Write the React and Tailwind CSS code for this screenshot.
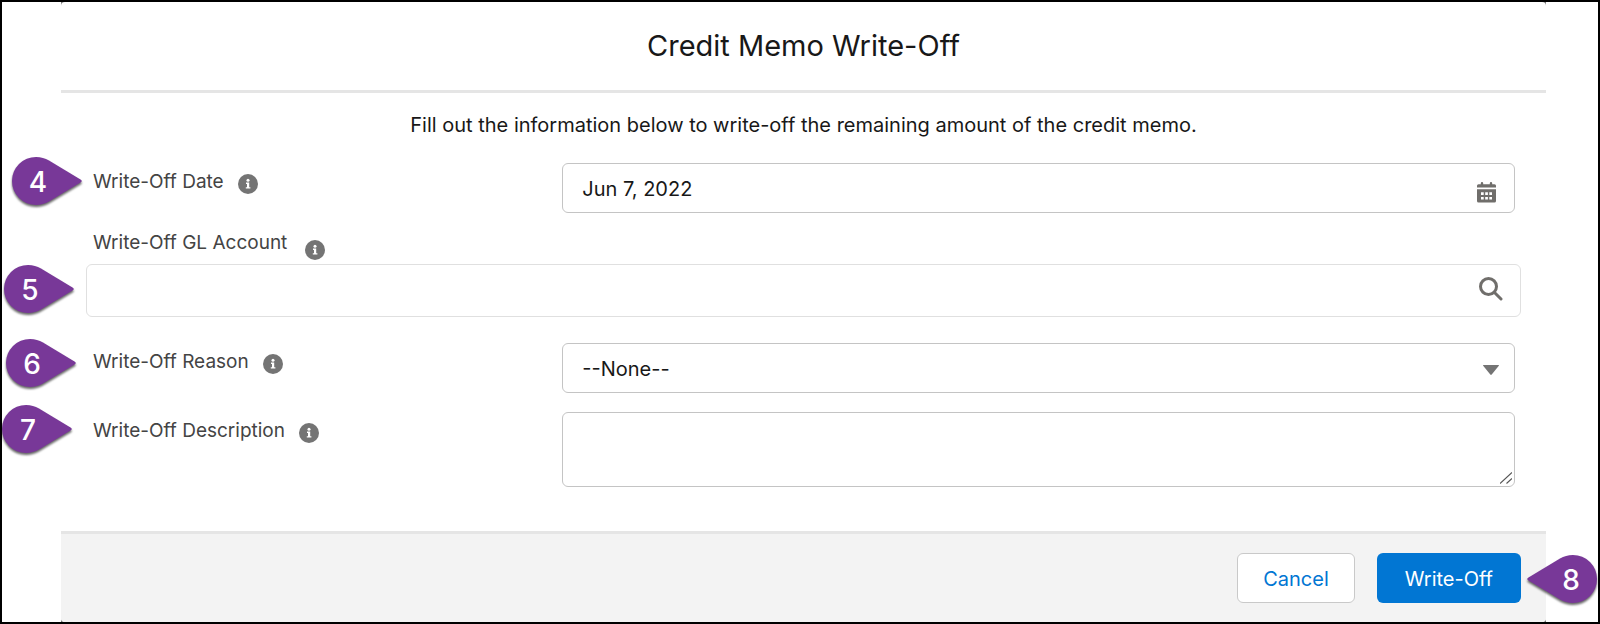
import { useState } from 'react';
import clsx from 'clsx';

const Pin = ({ number, flip, className }) => (
  <div
    className={clsx(
      'absolute flex h-12 w-[70px] items-center text-[28px] leading-8 font-medium text-white',
      flip ? 'justify-end' : 'justify-start',
      className
    )}
  >
    <svg
      viewBox="0 0 70 48"
      className="absolute inset-0 h-full w-full overflow-visible drop-shadow-[0_2px_1px_rgba(0,0,0,0.6)]"
      aria-hidden="true"
    >
      <path
        transform={flip ? 'translate(70 0) scale(-1 1)' : undefined}
        d="M24 0C29 0 33 1.2 37 3.5L68.5 22.4Q71 24 68.5 25.6L37 44.5C33 46.8 29 48 24 48A24 24 0 0 1 24 0Z"
        fill="#783898"
      />
    </svg>
    <span className="relative w-[52px] pt-px text-center">{number}</span>
  </div>
);

const InfoButton = ({ label, className }) => (
  <button type="button" aria-label={`Help for ${label}`} className={clsx('h-5 w-5 shrink-0', className)}>
    <svg viewBox="0 0 20 20" className="h-5 w-5">
      <circle cx="10" cy="10" r="10" fill="#747474" />
      <circle cx="10" cy="6.2" r="1.5" fill="#fff" />
      <path d="M8 8.6h3.2v4.6h1.2v1.4H7.8v-1.4H9V10H8z" fill="#fff" />
    </svg>
  </button>
);

const FieldRow = ({ id, label, pin, className, children }) => (
  <div className={clsx('relative mr-1.5 ml-[7px] grid grid-cols-[33%_1fr]', className)}>
    {pin}
    <div className="flex items-start gap-3.5 pt-[5px]">
      <label htmlFor={id} className="text-[19px] leading-7 text-[#444]">
        {label}
      </label>
      <InfoButton label={label} className="mt-1.5" />
    </div>
    <div className="relative">{children}</div>
  </div>
);

const CalendarIcon = () => (
  <svg viewBox="0 0 19 21" className="h-[21px] w-[19px]" fill="#706e6b">
    <path d="M1.5 2.3H3.8V1.2a1.2 1.2 0 0 1 2.4 0v1.1h6.6V1.2a1.2 1.2 0 0 1 2.4 0v1.1h2.3Q19 2.3 19 3.8v1.8H0V3.8Q0 2.3 1.5 2.3Z" />
    <path
      fillRule="evenodd"
      d="M0 7.3h19v11.6q0 1.6-1.6 1.6H1.6Q0 20.5 0 18.9ZM4 10.3v2.7h2.7v-2.7ZM8.2 10.3v2.7h2.7v-2.7ZM12.3 10.3v2.7h2.7v-2.7ZM4 14.9v2.7h2.7v-2.7ZM8.2 14.9v2.7h2.7v-2.7ZM12.3 14.9v2.7h2.7v-2.7Z"
    />
  </svg>
);

const SearchIcon = () => (
  <svg viewBox="0 0 24 24" className="h-6 w-6" fill="none" stroke="#706e6b" strokeWidth="3">
    <circle cx="9.5" cy="9.5" r="8" />
    <path d="M15.5 15.5L22 22" strokeLinecap="round" />
  </svg>
);

const control = 'block w-full rounded-md border border-[#c4c4c4] bg-white px-[19px] text-xl text-[#181818]';

const App = () => {
  const [date, setDate] = useState('Jun 7, 2022');
  const [account, setAccount] = useState('');
  const [reason, setReason] = useState('');
  const [description, setDescription] = useState('');

  return (
    <div className="flex min-h-screen flex-col border-2 border-black bg-white pr-[52px] pl-[59px] font-[Inter,sans-serif]">
      <div className="flex grow flex-col bg-[#777]">
        <form
          className="flex grow flex-col rounded bg-white"
          aria-labelledby="dialog-title"
          onSubmit={(e) => e.preventDefault()}
        >
          <header className="border-b-[3px] border-[#e5e5e5] pt-6 pb-6 text-center">
            <h1 id="dialog-title" className="text-[29px] leading-10 text-[#181818]">
              Credit Memo Write-Off
            </h1>
          </header>

          <div className="grow px-[25px] pt-[18px] pb-11">
            <p className="mb-6 text-center text-xl leading-7 text-[#181818]">
              Fill out the information below to write-off the remaining amount of the credit memo.
            </p>

            <FieldRow
              id="date"
              label="Write-Off Date"
              pin={<Pin number={4} className="-top-1.5 right-full mr-[11px]" />}
            >
              <input
                id="date"
                type="text"
                value={date}
                onChange={(e) => setDate(e.target.value)}
                className={clsx(control, 'h-[50px] pt-0.5')}
              />
              <button type="button" aria-label="Select a date" className="absolute top-[19px] right-[19px]">
                <CalendarIcon />
              </button>
            </FieldRow>

            <div className="mt-4 mb-[26px]">
              <div className="ml-[7px] flex h-[35px] items-start gap-[18px]">
                <label htmlFor="account" className="text-[19px] leading-7 text-[#444]">
                  Write-Off GL Account
                </label>
                <InfoButton label="Write-Off GL Account" className="mt-[11px]" />
              </div>
              <div className="relative">
                <Pin number={5} className="top-px right-full mr-3" />
                <input
                  id="account"
                  type="text"
                  value={account}
                  onChange={(e) => setAccount(e.target.value)}
                  className="block h-[53px] w-full rounded-md border border-[#e0e0e0] bg-white pr-14 pl-[19px] text-xl text-[#181818]"
                />
                <button type="button" aria-label="Search" className="absolute top-[13px] right-[18px]">
                  <SearchIcon />
                </button>
              </div>
            </div>

            <FieldRow
              id="reason"
              label="Write-Off Reason"
              className="mb-[19px]"
              pin={<Pin number={6} className="-top-1 right-full mr-[17px]" />}
            >
              <select
                id="reason"
                value={reason}
                onChange={(e) => setReason(e.target.value)}
                className={clsx(control, 'h-[50px] appearance-none pt-0.5')}
              >
                <option value="">--None--</option>
              </select>
              <svg
                viewBox="0 0 16 10"
                className="pointer-events-none absolute top-[22px] right-4 h-2.5 w-4"
                fill="#747474"
                aria-hidden="true"
              >
                <path d="M.5 0h15q.8 0 .3.7L8.7 9.5q-.7.8-1.4 0L.2.7Q-.3 0 .5 0Z" />
              </svg>
            </FieldRow>

            <FieldRow
              id="description"
              label="Write-Off Description"
              pin={<Pin number={7} className="-top-[7px] right-full mr-[21px]" />}
            >
              <textarea
                id="description"
                value={description}
                onChange={(e) => setDescription(e.target.value)}
                className={clsx(control, 'h-[75px] resize-none py-2')}
              />
              <svg
                viewBox="0 0 12 12"
                className="pointer-events-none absolute right-[3px] bottom-[3px] h-3 w-3"
                stroke="#555"
                strokeWidth="1.1"
                aria-hidden="true"
              >
                <path d="M0 11.5L12 .5M6.5 11.5L12 6.5" />
              </svg>
            </FieldRow>
          </div>

          <footer className="flex justify-end gap-[22px] rounded-b border-t-[3px] border-[#e5e5e5] bg-[#f3f3f3] px-[25px] py-[19px]">
            <button
              type="button"
              className="h-[50px] rounded-md border border-[#c9c9c9] bg-white px-[25px] pt-0.5 text-xl text-[#0176d3]"
            >
              Cancel
            </button>
            <div className="relative">
              <button
                type="submit"
                className="h-[50px] rounded-md bg-[#0176d3] px-7 pt-0.5 text-xl text-white"
              >
                Write-Off
              </button>
              <Pin number={8} flip className="top-0.5 left-full ml-1.5" />
            </div>
          </footer>
        </form>
      </div>
    </div>
  );
};

export default App;
